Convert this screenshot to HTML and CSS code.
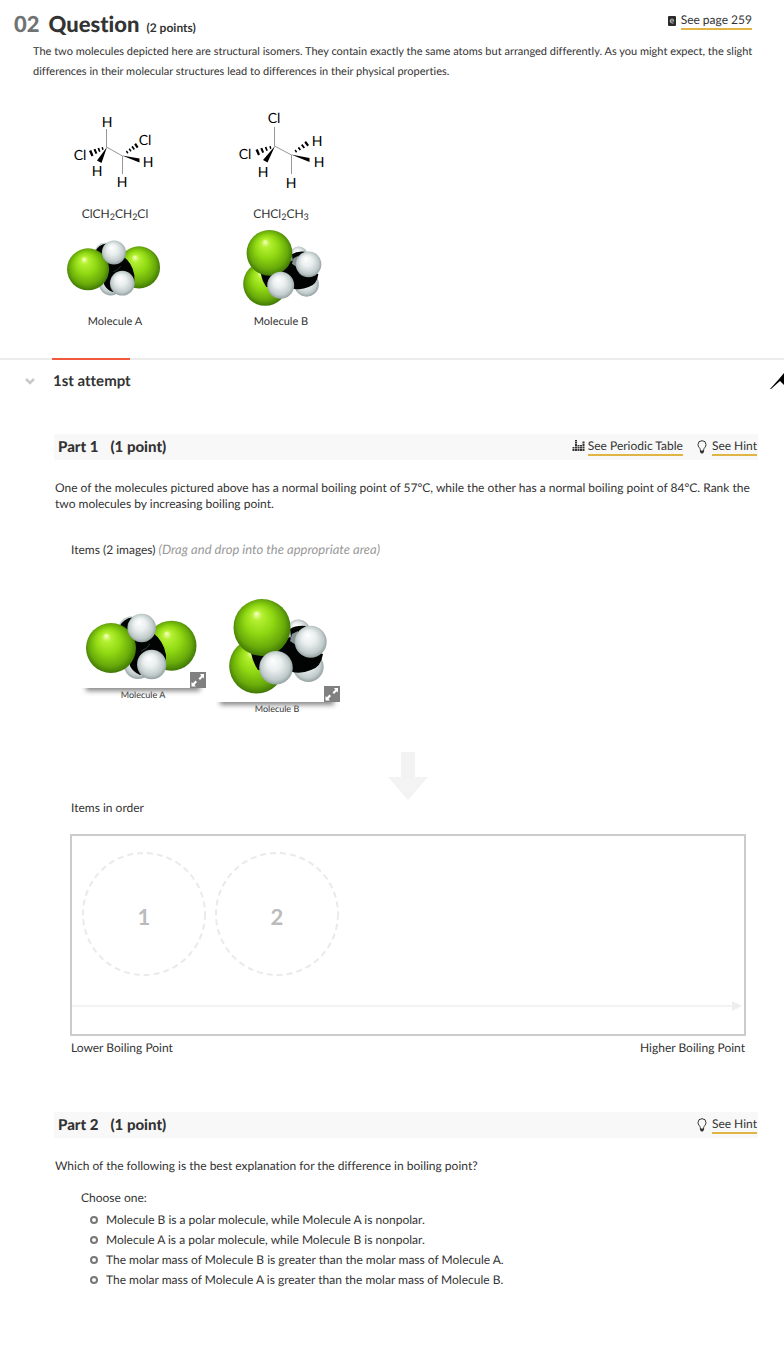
FILE: index.html
```html
<!DOCTYPE html>
<html lang="en">
<head>
<meta charset="utf-8">
<title>Question 02</title>
<link rel="stylesheet" href="styles.css">
</head>
<body>
<svg class="defs" aria-hidden="true">
  <defs>
    <radialGradient id="green" cx=".5" cy=".5" r=".56" fx=".4" fy=".25">
      <stop offset="0" stop-color="#fbffc8"/><stop offset=".16" stop-color="#b4f032"/><stop offset=".45" stop-color="#90d812"/><stop offset=".75" stop-color="#68aa0a"/><stop offset="1" stop-color="#2f6303"/>
    </radialGradient>
    <radialGradient id="white" cx=".5" cy=".5" r=".56" fx=".4" fy=".28">
      <stop offset="0" stop-color="#ffffff"/><stop offset=".4" stop-color="#e9eeee"/><stop offset=".75" stop-color="#c2cccc"/><stop offset="1" stop-color="#82908f"/>
    </radialGradient>
    <symbol id="mol-a" viewBox="0 4 126 76">
      <circle cx="91.5" cy="37.7" r="25" fill="url(#green)"/>
      <circle cx="51" cy="21" r="12.5" fill="url(#white)"/>
      <circle cx="58" cy="57" r="14" fill="url(#white)"/>
      <path d="M39 19Q44 10 52 9.500L72 24Q84 33 86 47V55L60 67Q53 64 50 58L48 22Z" fill="#020303"/>
      <path d="M61 43Q67 41 70 36" fill="none" stroke="#2c3b3d" stroke-width="1"/>
      <circle cx="31" cy="40" r="25" fill="url(#green)"/>
      <circle cx="61.700" cy="20" r="14.300" fill="url(#white)"/>
      <circle cx="71.700" cy="56.500" r="14.700" fill="url(#white)"/>
    </symbol>
    <symbol id="mol-b" viewBox="0 1 126 104">
      <circle cx="42.700" cy="69" r="27.500" fill="url(#green)"/>
      <circle cx="84.300" cy="34" r="11.500" fill="url(#white)"/>
      <circle cx="94.300" cy="69.700" r="15.300" fill="url(#white)"/>
      <path d="M76 32Q82 28 92 29L84 44Q80 40 77 41Z" fill="#020303"/>
      <path d="M37 56L76 40L88 50L109 57Q107 70 97 73Q88 77 78 75L44 73Q39 66 37 56Z" fill="#020303"/>
      <path d="M78 37L84 34L82 48L76 44Z" fill="#849293"/>
      <circle cx="48" cy="30.500" r="28.500" fill="url(#green)"/>
      <circle cx="96.700" cy="44.700" r="16" fill="url(#white)"/>
      <circle cx="62" cy="70.700" r="16.800" fill="url(#white)"/>
    </symbol>
    <symbol id="bulb" viewBox="0 0 10 14">
      <path d="M3.300 9.500C3 7.800 1 7 1 4.600A4 3.900 0 0 1 9 4.600C9 7 7 7.800 6.700 9.500L6.500 12H3.500Z" fill="none" stroke="#333" stroke-width="1"/>
      <path d="M3.200 10.500H6.800L6.400 12.800L5.700 13.500H4.300L3.600 12.800Z" fill="#333"/>
    </symbol>
    <symbol id="expand" viewBox="0 0 16 16">
      <path d="M10 2H14V6.500L12.700 5.300L10 8L8.500 6.500L11.200 3.700ZM6 14.500H1.500V10L2.900 11.300L5.500 8.500L7 10L4.500 12.900Z" fill="#fff"/>
    </symbol>
  </defs>
</svg>

<header class="question-head">
  <h1 class="title"><span class="number">02</span><span>Question</span><span class="points">(2 points)</span></h1>
  <div class="tool page-ref">
    <svg class="book" viewBox="0 0 8 10" aria-hidden="true"><rect width="8" height="10" rx="1" fill="#2a2a2a"/><path d="M2.200 5H5.800Q5.800 3 4 3T2.200 5T4 7H5.600" fill="none" stroke="#bbb"/></svg>
    <a class="link" href="#">See page 259</a>
  </div>
</header>

<p class="intro">The two molecules depicted here are structural isomers. They contain exactly the same atoms but arranged differently. As you might expect, the slight differences in their molecular structures lead to differences in their physical properties.</p>

<section class="molecules">
  <figure class="molecule">
    <svg class="structure" viewBox="0 0 120 90" role="img" aria-label="Structure of molecule A">
      <path class="bond" d="M51.500 24V42L67.500 51V69"/>
      <path d="M52 42L46.500 58L42 55.500Z M67 50.500L84.500 53.500V57.500Z"/>
      <path d="M34 46L36.500 51.500L38.500 50.500L36.300 45ZM38.500 44.500L40.500 49L42.300 48.200L40.500 43.800ZM42.500 43.300L44 47L45.500 46.500L44.200 42.700ZM46.500 42.300L47.300 45.200L48.600 44.600L48 41.900Z"/>
      <path d="M81 38L83.500 42L81.800 43.300L79.200 39.500ZM77.700 40.800L80 44L78.600 45L76.400 41.900ZM74.800 43.200L76.600 45.800L75.400 46.700L73.600 44.200ZM72 45.500L73.500 47.700L72.300 48.700L70.800 46.500Z"/>
      <g class="atoms"><text x="52" y="22">H</text><text x="25" y="55">Cl</text><text x="42" y="71">H</text><text x="90" y="40">Cl</text><text x="93" y="62">H</text><text x="67" y="82">H</text></g>
    </svg>
    <div class="formula">ClCH<sub>2</sub>CH<sub>2</sub>Cl</div>
    <svg class="model model-a" role="img" aria-label="Model of molecule A"><use href="#mol-a"/></svg>
    <figcaption>Molecule A</figcaption>
  </figure>
  <figure class="molecule">
    <svg class="structure" viewBox="0 0 120 90" role="img" aria-label="Structure of molecule B">
      <path class="bond" d="M53.500 22V41L70.500 50V69"/>
      <path d="M54 41L46.500 57.500L42 55Z M70 49.500L88.500 53V57Z"/>
      <path d="M34.500 45L37 50.500L39 49.500L36.800 44ZM39.300 43.500L41.300 48L43.100 47.200L41.300 42.800ZM43.800 42.300L45.300 46L46.800 45.500L45.500 41.700ZM48.300 41.300L49.100 44.200L50.400 43.600L49.800 40.900Z"/>
      <path d="M85 36L88 40L86.300 41.500L83.300 37.500ZM81.500 39L84 42.500L82.600 43.600L80 40.200ZM78 41.800L80 44.600L78.700 45.600L76.700 42.900ZM74.700 44.500L76.200 46.700L75 47.700L73.500 45.500Z"/>
      <g class="atoms"><text x="53" y="18">Cl</text><text x="24" y="54">Cl</text><text x="42" y="72">H</text><text x="96" y="41">H</text><text x="98" y="62">H</text><text x="70" y="83">H</text></g>
    </svg>
    <div class="formula">CHCl<sub>2</sub>CH<sub>3</sub></div>
    <svg class="model model-b" role="img" aria-label="Model of molecule B"><use href="#mol-b"/></svg>
    <figcaption>Molecule B</figcaption>
  </figure>
</section>

<section class="attempt">
  <div class="rule"><div class="marker"></div></div>
  <div class="attempt-head">
    <svg class="chevron" viewBox="0 0 10 8" aria-hidden="true"><path d="M1 2L5 6L9 2" fill="none" stroke="#c9c9c9" stroke-width="2.500"/></svg>
    <h2 class="attempt-title">1st attempt</h2>
    <svg class="edge" viewBox="0 0 14 18" aria-hidden="true"><path d="M0 17L9 7L14 1V13L10 9L1 17Z"/></svg>
  </div>

  <section class="part">
    <div class="part-head">
      <h3 class="part-title"><span>Part 1</span><span>(1 point)</span></h3>
      <div class="tools">
        <div class="tool tight">
          <svg class="table-icon" viewBox="0 0 13 13" aria-hidden="true"><g stroke="#333" stroke-width="2" stroke-dasharray="2 .5" fill="none"><path d="M1.500 12V8M4 12V1M6.500 12V6M9 12V6M11.500 12V2"/></g></svg>
          <a class="link" href="#">See Periodic Table</a>
        </div>
        <div class="tool">
          <svg class="bulb" aria-hidden="true"><use href="#bulb"/></svg>
          <a class="link" href="#">See Hint</a>
        </div>
      </div>
    </div>
    <p class="prompt">One of the molecules pictured above has a normal boiling point of 57ºC, while the other has a normal boiling point of 84ºC. Rank the two molecules by increasing boiling point.</p>

    <div class="ranking">
      <div class="label">Items (2 images) <em>(Drag and drop into the appropriate area)</em></div>
      <div class="cards">
        <figure class="card">
          <div class="picture">
            <svg class="card-a" role="img" aria-label="Molecule A"><use href="#mol-a"/></svg>
            <button class="expand" aria-label="Enlarge molecule A"><svg class="expand-icon"><use href="#expand"/></svg></button>
          </div>
          <figcaption>Molecule A</figcaption>
        </figure>
        <figure class="card">
          <div class="picture">
            <svg class="card-b" role="img" aria-label="Molecule B"><use href="#mol-b"/></svg>
            <button class="expand" aria-label="Enlarge molecule B"><svg class="expand-icon"><use href="#expand"/></svg></button>
          </div>
          <figcaption>Molecule B</figcaption>
        </figure>
      </div>
      <svg class="down" viewBox="0 0 40 48" aria-hidden="true"><path d="M13 0H27V25H40L20 48L0 25H13Z" fill="#f3f3f3"/></svg>
      <div class="label">Items in order</div>
      <div class="dropzone">
        <div class="slots">
          <div class="slot"><svg class="ring" viewBox="0 0 124 124" aria-hidden="true"><circle cx="62" cy="62" r="61"/></svg><span class="slot-number">1</span></div>
          <div class="slot"><svg class="ring" viewBox="0 0 124 124" aria-hidden="true"><circle cx="62" cy="62" r="61"/></svg><span class="slot-number">2</span></div>
        </div>
        <div class="axis"><div class="axis-line"></div><div class="axis-tip"></div></div>
      </div>
      <div class="ends"><span>Lower Boiling Point</span><span>Higher Boiling Point</span></div>
    </div>
  </section>

  <section class="part">
    <div class="part-head">
      <h3 class="part-title"><span>Part 2</span><span>(1 point)</span></h3>
      <div class="tool">
        <svg class="bulb" aria-hidden="true"><use href="#bulb"/></svg>
        <a class="link" href="#">See Hint</a>
      </div>
    </div>
    <p class="prompt">Which of the following is the best explanation for the difference in boiling point?</p>
    <fieldset class="choices">
      <legend>Choose one:</legend>
      <label class="choice"><input type="radio" name="reason"><span>Molecule B is a polar molecule, while Molecule A is nonpolar.</span></label>
      <label class="choice"><input type="radio" name="reason"><span>Molecule A is a polar molecule, while Molecule B is nonpolar.</span></label>
      <label class="choice"><input type="radio" name="reason"><span>The molar mass of Molecule B is greater than the molar mass of Molecule A.</span></label>
      <label class="choice"><input type="radio" name="reason"><span>The molar mass of Molecule A is greater than the molar mass of Molecule B.</span></label>
    </fieldset>
  </section>
</section>
</body>
</html>
```
FILE: styles.css
```css
* { box-sizing: border-box; }
body { margin: 0; padding-bottom: 64px; background: #fff; color: #333; font: 12px/16px Lato, "Open Sans", sans-serif; text-rendering: geometricPrecision; font-variant-ligatures: none; }
h1, h2, h3, p, figure, fieldset { margin: 0; padding: 0; border: 0; }
svg { display: block; flex: none; }
.defs { position: absolute; width: 0; height: 0; }

.question-head { display: flex; justify-content: space-between; align-items: flex-start; padding: 10px 32px 0 14px; height: 42px; }
.title { display: flex; align-items: baseline; gap: 9px; font-size: 22px; line-height: 28px; font-weight: 900; }
.number { color: #6f7374; }
.points { font-size: 12px; font-weight: 700; margin-left: -2px; }
.tool { display: flex; align-items: center; gap: 5px; }
.page-ref { padding-top: 2px; }
.tight { gap: 3px; }
.link { color: #333; text-decoration: none; border-bottom: 2px solid #e0b544; line-height: 16px; }
.book { width: 8px; height: 10px; }
.intro { padding: 0 16px 0 33px; font-size: 11px; line-height: 20px; }

.molecules { display: flex; gap: 46px; padding: 23px 55px 28px; }
.molecule { display: flex; flex-direction: column; align-items: center; width: 120px; }
.structure { width: 120px; height: 90px; }
.bond { fill: none; stroke: #999; }
.atoms { font-size: 14px; text-anchor: middle; }
.formula { height: 18px; margin: 10px 0 6px; line-height: 18px; }
.formula sub { font-size: 9px; line-height: 0; vertical-align: -2px; }
.model { height: 84px; }
.model-a { width: 106px; }
.model-b { width: 101px; }
.molecule figcaption { margin-top: 1px; font-size: 11px; }

.rule { height: 2px; background: #ececec; padding-left: 52px; }
.marker { width: 78px; height: 2px; background: #f0593e; }
.attempt-head { display: flex; align-items: center; height: 42px; padding-left: 25px; }
.chevron { width: 10px; height: 8px; }
.attempt-title { margin-left: 18px; font-size: 15px; line-height: 20px; font-weight: 700; }
.edge { width: 14px; height: 18px; margin-left: auto; }

.part { margin: 32px 26px 0 54px; }
.part + .part { margin-top: 56px; }
.part-head { display: flex; justify-content: space-between; align-items: center; height: 26px; padding: 0 1px 0 4px; background: #f8f8f8; }
.part-title { display: flex; gap: 12px; font-size: 15px; line-height: 20px; font-weight: 900; }
.tools { display: flex; gap: 14px; }
.table-icon { width: 13px; height: 13px; margin-bottom: 4px; }
.bulb { width: 10px; height: 14px; }
.prompt { margin-top: 20px; padding-left: 1px; }

.ranking { margin: 30px 12px 0 16px; }
.label { padding-left: 1px; }
.label em { color: #999; font-size: 13px; line-height: 1; }
.cards { display: flex; align-items: center; gap: 8px; margin: 40px 0 36px 10px; }
.picture { position: relative; box-shadow: 0 9px 5px -6px #888; background: #fff; }
.card-a { width: 126px; height: 76px; }
.card-b { width: 126px; height: 104px; }
.expand { position: absolute; right: 0; bottom: 0; width: 16px; height: 16px; padding: 0; border: 0; background: #808080; }
.expand-icon { width: 16px; height: 16px; }
.card figcaption { text-align: center; font-size: 9px; line-height: 14px; }
.down { width: 40px; height: 48px; margin: 0 auto; }
.dropzone { margin-top: 18px; padding: 16px 2px 23px 0; border: 2px solid #ccc; }
.slots { display: flex; gap: 9px; padding-left: 10px; }
.slot { display: grid; place-items: center; width: 124px; height: 124px; color: #bbb; font-size: 22px; font-weight: 700; }
.slot > * { grid-area: 1 / 1; }
.slot-number { padding-top: 5px; }
.ring { width: 124px; height: 124px; }
.ring circle { fill: none; stroke: #eaeaea; stroke-width: 2; stroke-dasharray: 6 4; }
.axis { display: flex; align-items: center; margin-top: 25px; }
.axis-line { flex: 1; height: 2px; background: #f3f3f3; }
.axis-tip { border: 5px solid transparent; border-left: 10px solid #eee; border-right: 0; }
.ends { display: flex; justify-content: space-between; margin-top: 4px; padding: 0 1px; }

.choices { margin: 16px 0 0 27px; }
.choices legend { padding: 0; margin-bottom: 4px; }
.choice { display: flex; align-items: center; gap: 8px; height: 20px; padding-left: 9px; }
.choice input { appearance: none; width: 8px; height: 8px; margin: 0; border: 2px solid #777; border-radius: 50%; }
```
